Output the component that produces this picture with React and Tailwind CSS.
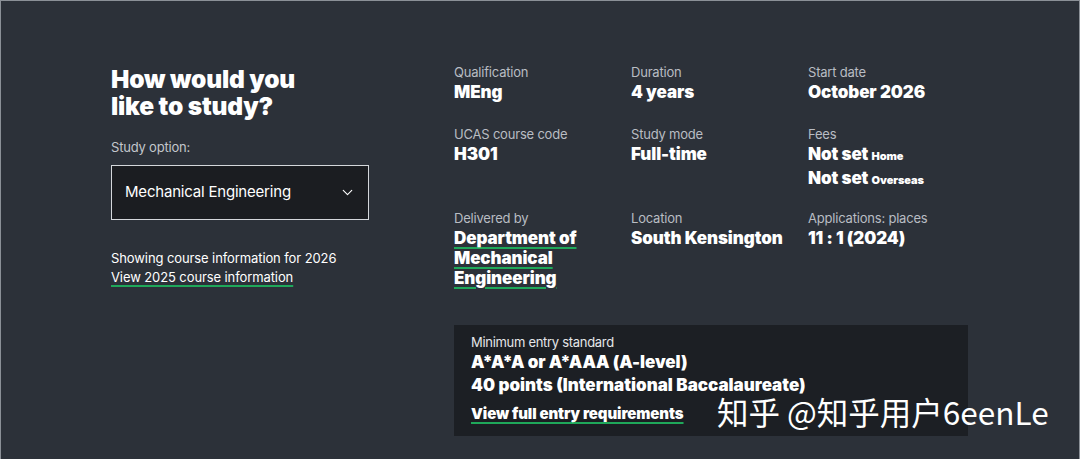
import React from "react";
import { ChevronDown } from "lucide-react";

const font = { fontFamily: "Inter, 'Noto Sans', sans-serif" };

const valueCls = "mt-[2px] text-[17px] leading-[20px] font-black text-white tracking-[-0.1px]";

function Item({ label, children, className = "" }) {
  return (
    <div className={className}>
      <div className="text-[13px] leading-[16px] text-[#b9bdc3] tracking-[-0.2px]">{label}</div>
      <div className={valueCls}>{children}</div>
    </div>
  );
}

const link = "underline decoration-[#1fa85a] decoration-2 underline-offset-[3px]";

export default function App() {
  return (
    <div
      className="relative w-[1080px] h-[459px] overflow-hidden bg-[#2c3139] border-l border-t border-r border-[#8b9097]"
      style={font}
    >
      <div className="flex pl-[110px] pt-[63px]">
        {/* left column */}
        <div className="w-[343px] flex flex-col pt-[2px]">
          <h1 className="text-[24.5px] leading-[27px] font-black text-white tracking-[-0.2px]">
            How would you
            <br />
            like to study?
          </h1>
          <div className="mt-[19px] text-[13px] leading-[16px] text-[#c3c7cc] tracking-[-0.2px]">Study option:</div>
          <div className="mt-[10px] w-[258px] h-[55px] border border-[#d4d7db] bg-[#1b1d21] flex items-center justify-between pl-[13px] pr-[12px]">
            <span className="text-[15px] text-white tracking-[-0.2px]">Mechanical Engineering</span>
            <ChevronDown size={17} strokeWidth={1.6} color="#ffffff" />
          </div>
          <div className="mt-[29px] text-[13px] leading-[19px] text-white tracking-[-0.1px]">
            Showing course information for 2026
          </div>
          <div className="text-[13px] leading-[19px] text-white tracking-[-0.1px]">
            <span className={"underline decoration-[#1fa85a] decoration-[1.5px] underline-offset-[3px]"}>View 2025 course information</span>
          </div>
        </div>

        {/* right column */}
        <div className="flex flex-col">
          <div className="grid grid-cols-[177px_177px_177px]">
            <Item label="Qualification">MEng</Item>
            <Item label="Duration">4 years</Item>
            <Item label="Start date">October 2026</Item>
          </div>
          <div className="mt-[24px] grid grid-cols-[177px_177px_177px]">
            <Item label="UCAS course code">H301</Item>
            <Item label="Study mode">Full-time</Item>
            <div>
              <div className="text-[13px] leading-[16px] text-[#b9bdc3] tracking-[-0.2px]">Fees</div>
              <div className={valueCls}>
                Not set <span className="text-[11px] leading-none">Home</span>
              </div>
              <div className="mt-[4px] text-[17px] leading-[20px] font-black text-white tracking-[-0.1px]">
                Not set <span className="text-[11px] leading-none">Overseas</span>
              </div>
            </div>
          </div>
          <div className="mt-[22px] grid grid-cols-[177px_177px_177px]">
            <Item label="Delivered by">
              <span className={link}>Department of Mechanical Engineering</span>
            </Item>
            <Item label="Location">South Kensington</Item>
            <Item label="Applications: places">11 : 1 (2024)</Item>
          </div>
          <div className="mt-[37px] w-[514px] bg-[#1c1f24] pl-[17px] pt-[9px] pb-[11px]">
            <div className="text-[13px] leading-[17px] text-[#e4e6e9] tracking-[-0.3px]">Minimum entry standard</div>
            <div className="text-[17px] leading-[23px] font-black text-white tracking-[-0.1px]">A*A*A or A*AAA (A-level)</div>
            <div className="text-[17px] leading-[23px] font-black text-white tracking-[0px]">40 points (International Baccalaureate)</div>
            <div className="mt-[6px] text-[15px] leading-[22px] font-black text-white tracking-[-0.1px]">
              <span className={link}>View full entry requirements</span>
            </div>
          </div>
        </div>
      </div>

      {/* watermark */}
      <div
        className="absolute left-[716px] top-[390px] text-[31.5px] leading-[40px] text-white whitespace-nowrap"
        style={{ fontFamily: "'Noto Sans CJK SC', 'Noto Sans', sans-serif" }}
      >
        知乎 @知乎用户6eenLe
      </div>
    </div>
  );
}
